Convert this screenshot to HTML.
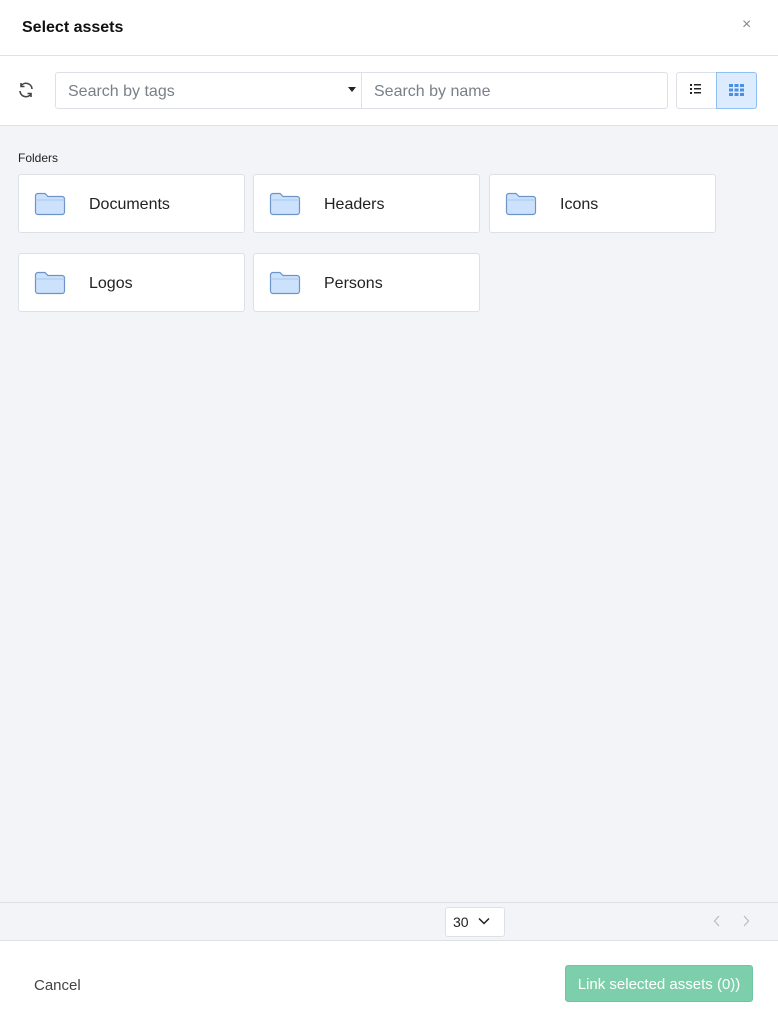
<!DOCTYPE html>
<html><head><style>
*{box-sizing:border-box;margin:0;padding:0}
body{width:778px;height:1024px;font-family:"Liberation Sans",sans-serif;background:#fff;position:relative;overflow:hidden;color:#212529}
.abs{position:absolute}
.card{position:absolute;width:227px;height:59px;background:#fff;border:1px solid #dde0e6;border-radius:3px}
.card svg{position:absolute;left:15px;top:17px}
.card span{position:absolute;left:70px;top:21px;font-size:16px;color:#222}
</style></head><body>
<div class="abs" style="left:22px;top:19px;font-size:16px;font-weight:bold;color:#111">Select assets</div>
<div class="abs" style="left:742px;top:16px;font-size:16px;color:#888">×</div>
<div class="abs" style="left:0;top:55px;width:778px;height:1px;background:#dee2e6"></div>
<svg class="abs" style="left:17px;top:81px" width="18" height="18" viewBox="0 0 18 18" fill="none" stroke="#444" stroke-width="1.6"><path d="M15 8A6 6 0 0 0 4 5M3 10a6 6 0 0 0 11 3"/><path d="M4 2v3.5h3.5M14 16v-3.5h-3.5"/></svg>
<div class="abs" style="left:55px;top:72px;width:613px;height:37px;border:1px solid #dde0e6;border-radius:3px;background:#fff"></div>
<div class="abs" style="left:361px;top:73px;width:1px;height:35px;background:#dde0e6"></div>
<div class="abs" style="left:68px;top:83px;font-size:16px;color:#7a7f87">Search by tags</div>
<div class="abs" style="left:348px;top:87px;width:0;height:0;border-left:4px solid transparent;border-right:4px solid transparent;border-top:5px solid #222"></div>
<div class="abs" style="left:374px;top:83px;font-size:16px;color:#7a7f87">Search by name</div>
<div class="abs" style="left:676px;top:72px;width:81px;height:37px;border:1px solid #dde0e6;border-radius:3px;background:#fff"></div>
<div class="abs" style="left:716px;top:72px;width:41px;height:37px;border:1px solid #8fbff5;border-radius:0 3px 3px 0;background:#dcebfd"></div>
<svg class="abs" style="left:690px;top:84px" width="12" height="10"><g fill="#222"><rect x="0" y="0" width="2" height="2"/><rect x="0" y="4" width="2" height="2"/><rect x="0" y="8" width="2" height="2"/><rect x="4" y="0" width="7" height="1.5"/><rect x="4" y="4" width="7" height="1.5"/><rect x="4" y="8" width="7" height="1.5"/></g></svg>
<svg class="abs" style="left:729px;top:84px" width="15" height="12"><g fill="#4a90e2"><rect x="0" y="0" width="4" height="3"/><rect x="5.5" y="0" width="4" height="3"/><rect x="11" y="0" width="4" height="3"/><rect x="0" y="4.5" width="4" height="3"/><rect x="5.5" y="4.5" width="4" height="3"/><rect x="11" y="4.5" width="4" height="3"/><rect x="0" y="9" width="4" height="3"/><rect x="5.5" y="9" width="4" height="3"/><rect x="11" y="9" width="4" height="3"/></g></svg>
<div class="abs" style="left:0;top:125px;width:778px;height:1px;background:#dee2e6"></div>
<div class="abs" style="left:0;top:126px;width:778px;height:776px;background:#f3f4f8"></div>
<div class="abs" style="left:18px;top:151px;font-size:12px;color:#222">Folders</div>
<svg width="0" height="0" style="position:absolute"><defs><g id="f"><path d="M1.5 4a2.5 2.5 0 0 1 2.5-2.5h7l3 3h14a2.5 2.5 0 0 1 2.5 2.5v13a2.5 2.5 0 0 1-2.5 2.5H4a2.5 2.5 0 0 1-2.5-2.5z" fill="#cce2fc" stroke="#6c94c8" stroke-width="1.2"/><path d="M1.5 8h29" stroke="#a9c6ea" stroke-width="1"/></g></defs></svg>
<div class="card" style="left:18px;top:174px"><svg width="33" height="25"><use href="#f"/></svg><span>Documents</span></div>
<div class="card" style="left:253px;top:174px"><svg width="33" height="25"><use href="#f"/></svg><span>Headers</span></div>
<div class="card" style="left:489px;top:174px"><svg width="33" height="25"><use href="#f"/></svg><span>Icons</span></div>
<div class="card" style="left:18px;top:253px"><svg width="33" height="25"><use href="#f"/></svg><span>Logos</span></div>
<div class="card" style="left:253px;top:253px"><svg width="33" height="25"><use href="#f"/></svg><span>Persons</span></div>
<div class="abs" style="left:0;top:902px;width:778px;height:39px;background:#f3f4f8;border-top:1px solid #dde0e6;border-bottom:1px solid #dde0e6"></div>
<div class="abs" style="left:445px;top:907px;width:60px;height:30px;background:#fff;border:1px solid #dde0e6;border-radius:3px"></div>
<div class="abs" style="left:453px;top:914px;font-size:14px;color:#222">30</div>
<svg class="abs" style="left:478px;top:917px" width="12" height="8"><path d="M1 1.5l5 5 5-5" fill="none" stroke="#222" stroke-width="1.5"/></svg>
<svg class="abs" style="left:713px;top:915px" width="8" height="12"><path d="M6 1L1.5 6 6 11" fill="none" stroke="#bbb" stroke-width="1.2"/></svg>
<svg class="abs" style="left:742px;top:915px" width="8" height="12"><path d="M2 1l4.5 5L2 11" fill="none" stroke="#bbb" stroke-width="1.2"/></svg>
<div class="abs" style="left:34px;top:977px;font-size:15px;color:#444">Cancel</div>
<div class="abs" style="left:565px;top:965px;width:188px;height:37px;background:#7dcfab;border:1px solid #6fc79f;border-radius:3px;color:#fff;font-size:15px;text-align:center;line-height:37px">Link selected assets (0))</div>
</body></html>
